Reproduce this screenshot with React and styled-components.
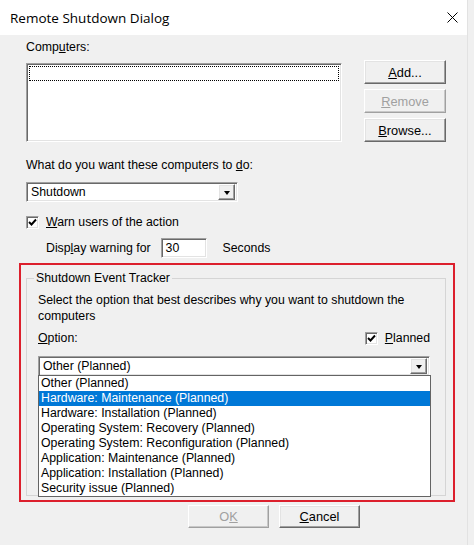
import React from 'react';
import styled, { createGlobalStyle, css } from 'styled-components';

const Global = createGlobalStyle`
  html, body { margin: 0; padding: 0; background: #f0f0f0; }
  body {
    font-family: "Liberation Sans", Arial, sans-serif;
    font-size: 12.3px;
    color: #000;
  }
  * { box-sizing: border-box; }
`;

const sunken = css`
  background: #fff;
  border: 1px solid;
  border-color: #a0a0a0 #ffffff #ffffff #a0a0a0;
  box-shadow: inset 1px 1px 0 #696969, inset -1px -1px 0 #e3e3e3;
`;

const raised = css`
  background: #f0f0f0;
  border: 1px solid;
  border-color: #ffffff #696969 #696969 #ffffff;
  box-shadow: inset -1px -1px 0 #a0a0a0, inset 1px 1px 0 #e3e3e3;
`;

const Window = styled.div`
  width: 468px;
  height: 545px;
  background: #f0f0f0;
  display: flex;
  flex-direction: column;
  overflow: hidden;
  border-right: 1px solid #e2e2e2;
`;

const TitleBar = styled.div`
  height: 35px;
  flex: none;
  background: #fff;
  display: flex;
  align-items: center;
  justify-content: space-between;
  padding: 0 9px 0 10px;
  font-family: "Open Sans", "Noto Sans", sans-serif;
  font-size: 13.5px;
  color: #000;
`;

const CloseIcon = styled.svg`
  width: 11px;
  height: 11px;
  display: block;
`;

const Body = styled.div`
  padding: 5px 0 0 26px;
  display: flex;
  flex-direction: column;
`;

const Label = styled.div`
  line-height: 15px;
  height: 15px;
  white-space: nowrap;
  margin-top: ${(p) => p.$mt || 0}px;
`;

const U = styled.span`
  text-decoration: underline;
  text-underline-offset: 1px;
`;

const TopRow = styled.div`
  display: flex;
  gap: 22px;
`;

const LeftCol = styled.div`
  display: flex;
  flex-direction: column;
`;

const ListBox = styled.div`
  ${sunken};
  margin-top: 8px;
  width: 316px;
  height: 79px;
  padding: 2px;
`;

const FocusRow = styled.div`
  height: 15px;
  border: 1px dotted #000;
`;

const ButtonCol = styled.div`
  margin-top: 20px;
  display: flex;
  flex-direction: column;
  gap: 5px;
`;

const Button = styled.div`
  ${raised};
  width: ${(p) => p.$w || 82}px;
  height: ${(p) => p.$h || 24}px;
  display: flex;
  align-items: center;
  justify-content: center;
  font-size: 12.8px;
  color: ${(p) => (p.$disabled ? '#a0a0a0' : '#000')};
  ${(p) =>
    p.$disabled &&
    css`
      border-color: #ffffff #a0a0a0 #a0a0a0 #ffffff;
      box-shadow: inset -1px -1px 0 #c8c8c8;
    `}
`;

const Combo = styled.div`
  ${sunken};
  position: relative;
  width: ${(p) => p.$w}px;
  height: 20px;
  margin-top: ${(p) => p.$mt || 0}px;
  display: flex;
  align-items: center;
  padding: 2px 2px 2px 4px;
`;

const ComboText = styled.div`
  flex: 1;
  line-height: 15px;
  white-space: nowrap;
`;

const ArrowButton = styled.div`
  ${raised};
  width: 17px;
  height: 16px;
  flex: none;
  display: flex;
  align-items: center;
  justify-content: center;
`;

const Arrow = styled.div`
  width: 0;
  height: 0;
  border-left: 3.5px solid transparent;
  border-right: 3.5px solid transparent;
  border-top: 4px solid #000;
  margin-top: 1px;
`;

const CheckRow = styled.div`
  display: flex;
  align-items: center;
  gap: 7px;
  height: 16px;
  margin-top: ${(p) => p.$mt || 0}px;
  line-height: 15px;
`;

const CheckBox = styled.div`
  ${sunken};
  width: 13px;
  height: 13px;
  flex: none;
  display: flex;
  align-items: center;
  justify-content: center;
`;

const WarnRow = styled.div`
  display: flex;
  align-items: center;
  margin: 8px 0 0 20px;
  height: 20px;
`;

const NumberBox = styled.div`
  ${sunken};
  width: 46px;
  height: 20px;
  margin: 0 16px 0 10px;
  padding: 2px 4px;
  line-height: 15px;
`;

const Highlight = styled.div`
  margin: 5px 0 0 -7px;
  width: 436px;
  border: 2px solid #dc1f2c;
  padding: 5px 7px 4px 5px;
`;

const GroupBox = styled.fieldset`
  margin: 0;
  width: 420px;
  height: 226px;
  border: 1px solid #d5d5d5;
  padding: 0 15px 0 11px;
  min-width: 0;
`;

const Legend = styled.legend`
  padding: 0 2px;
  margin-left: -4px;
  line-height: 16px;
  font-size: 12.3px;
`;

const Desc = styled.div`
  margin-top: 6px;
  line-height: 16px;
  padding-right: 4px;
`;

const OptionRow = styled.div`
  display: flex;
  justify-content: space-between;
  align-items: center;
  height: 16px;
  margin-top: 6px;
  line-height: 15px;
`;

const DropList = styled.div`
  position: absolute;
  top: 100%;
  left: -1px;
  width: 393px;
  height: 122px;
  background: #fff;
  border: 1px solid #646464;
  z-index: 2;
`;

const Item = styled.div`
  height: 15px;
  line-height: 15px;
  padding-left: 2px;
  white-space: nowrap;
  background: ${(p) => (p.$active ? '#0078d7' : 'transparent')};
  color: ${(p) => (p.$active ? '#fff' : '#000')};
`;

const BottomRow = styled.div`
  display: flex;
  gap: 10px;
  margin: 3px 0 0 162px;
`;

const Check = () => (
  <svg width="9" height="9" viewBox="0 0 9 9">
    <path d="M1 4 L3.5 6.5 L8 1.5" fill="none" stroke="#000" strokeWidth="1.9" />
  </svg>
);

const options = [
  'Other (Planned)',
  'Hardware: Maintenance (Planned)',
  'Hardware: Installation (Planned)',
  'Operating System: Recovery (Planned)',
  'Operating System: Reconfiguration (Planned)',
  'Application: Maintenance (Planned)',
  'Application: Installation (Planned)',
  'Security issue (Planned)',
];

export default function App() {
  return (
    <>
      <Global />
      <Window>
        <TitleBar>
          <span>Remote Shutdown Dialog</span>
          <CloseIcon viewBox="0 0 11 11">
            <path d="M0.5 0.5 L10.5 10.5 M10.5 0.5 L0.5 10.5" stroke="#000" strokeWidth="1" />
          </CloseIcon>
        </TitleBar>
        <Body>
          <TopRow>
            <LeftCol>
              <Label>
                Comp<U>u</U>ters:
              </Label>
              <ListBox>
                <FocusRow />
              </ListBox>
            </LeftCol>
            <ButtonCol>
              <Button>
                <U>A</U>dd...
              </Button>
              <Button $disabled>
                <U>R</U>emove
              </Button>
              <Button>
                <U>B</U>rowse...
              </Button>
            </ButtonCol>
          </TopRow>

          <Label $mt={16}>
            What do you want these computers to <U>d</U>o:
          </Label>
          <Combo $w={212} $mt={9}>
            <ComboText>Shutdown</ComboText>
            <ArrowButton>
              <Arrow />
            </ArrowButton>
          </Combo>

          <CheckRow $mt={12}>
            <CheckBox>
              <Check />
            </CheckBox>
            <span>
              <U>W</U>arn users of the action
            </span>
          </CheckRow>

          <WarnRow>
            <span>
              Disp<U>l</U>ay warning for
            </span>
            <NumberBox>30</NumberBox>
            <span>Seconds</span>
          </WarnRow>

          <Highlight>
            <GroupBox>
              <Legend>Shutdown Event Tracker</Legend>
              <Desc>Select the option that best describes why you want to shutdown the computers</Desc>
              <OptionRow>
                <span>
                  <U>O</U>ption:
                </span>
                <CheckRow>
                  <CheckBox>
                    <Check />
                  </CheckBox>
                  <span>
                    <U>P</U>lanned
                  </span>
                </CheckRow>
              </OptionRow>
              <Combo $w={392} $mt={10}>
                <ComboText>Other (Planned)</ComboText>
                <ArrowButton>
                  <Arrow />
                </ArrowButton>
                <DropList>
                  {options.map((o, i) => (
                    <Item key={o} $active={i === 1}>
                      {o}
                    </Item>
                  ))}
                </DropList>
              </Combo>
            </GroupBox>
          </Highlight>

          <BottomRow>
            <Button $disabled $w={81} $h={23}>
              O<U>K</U>
            </Button>
            <Button $w={81} $h={23}>
              <U>C</U>ancel
            </Button>
          </BottomRow>
        </Body>
      </Window>
    </>
  );
}
